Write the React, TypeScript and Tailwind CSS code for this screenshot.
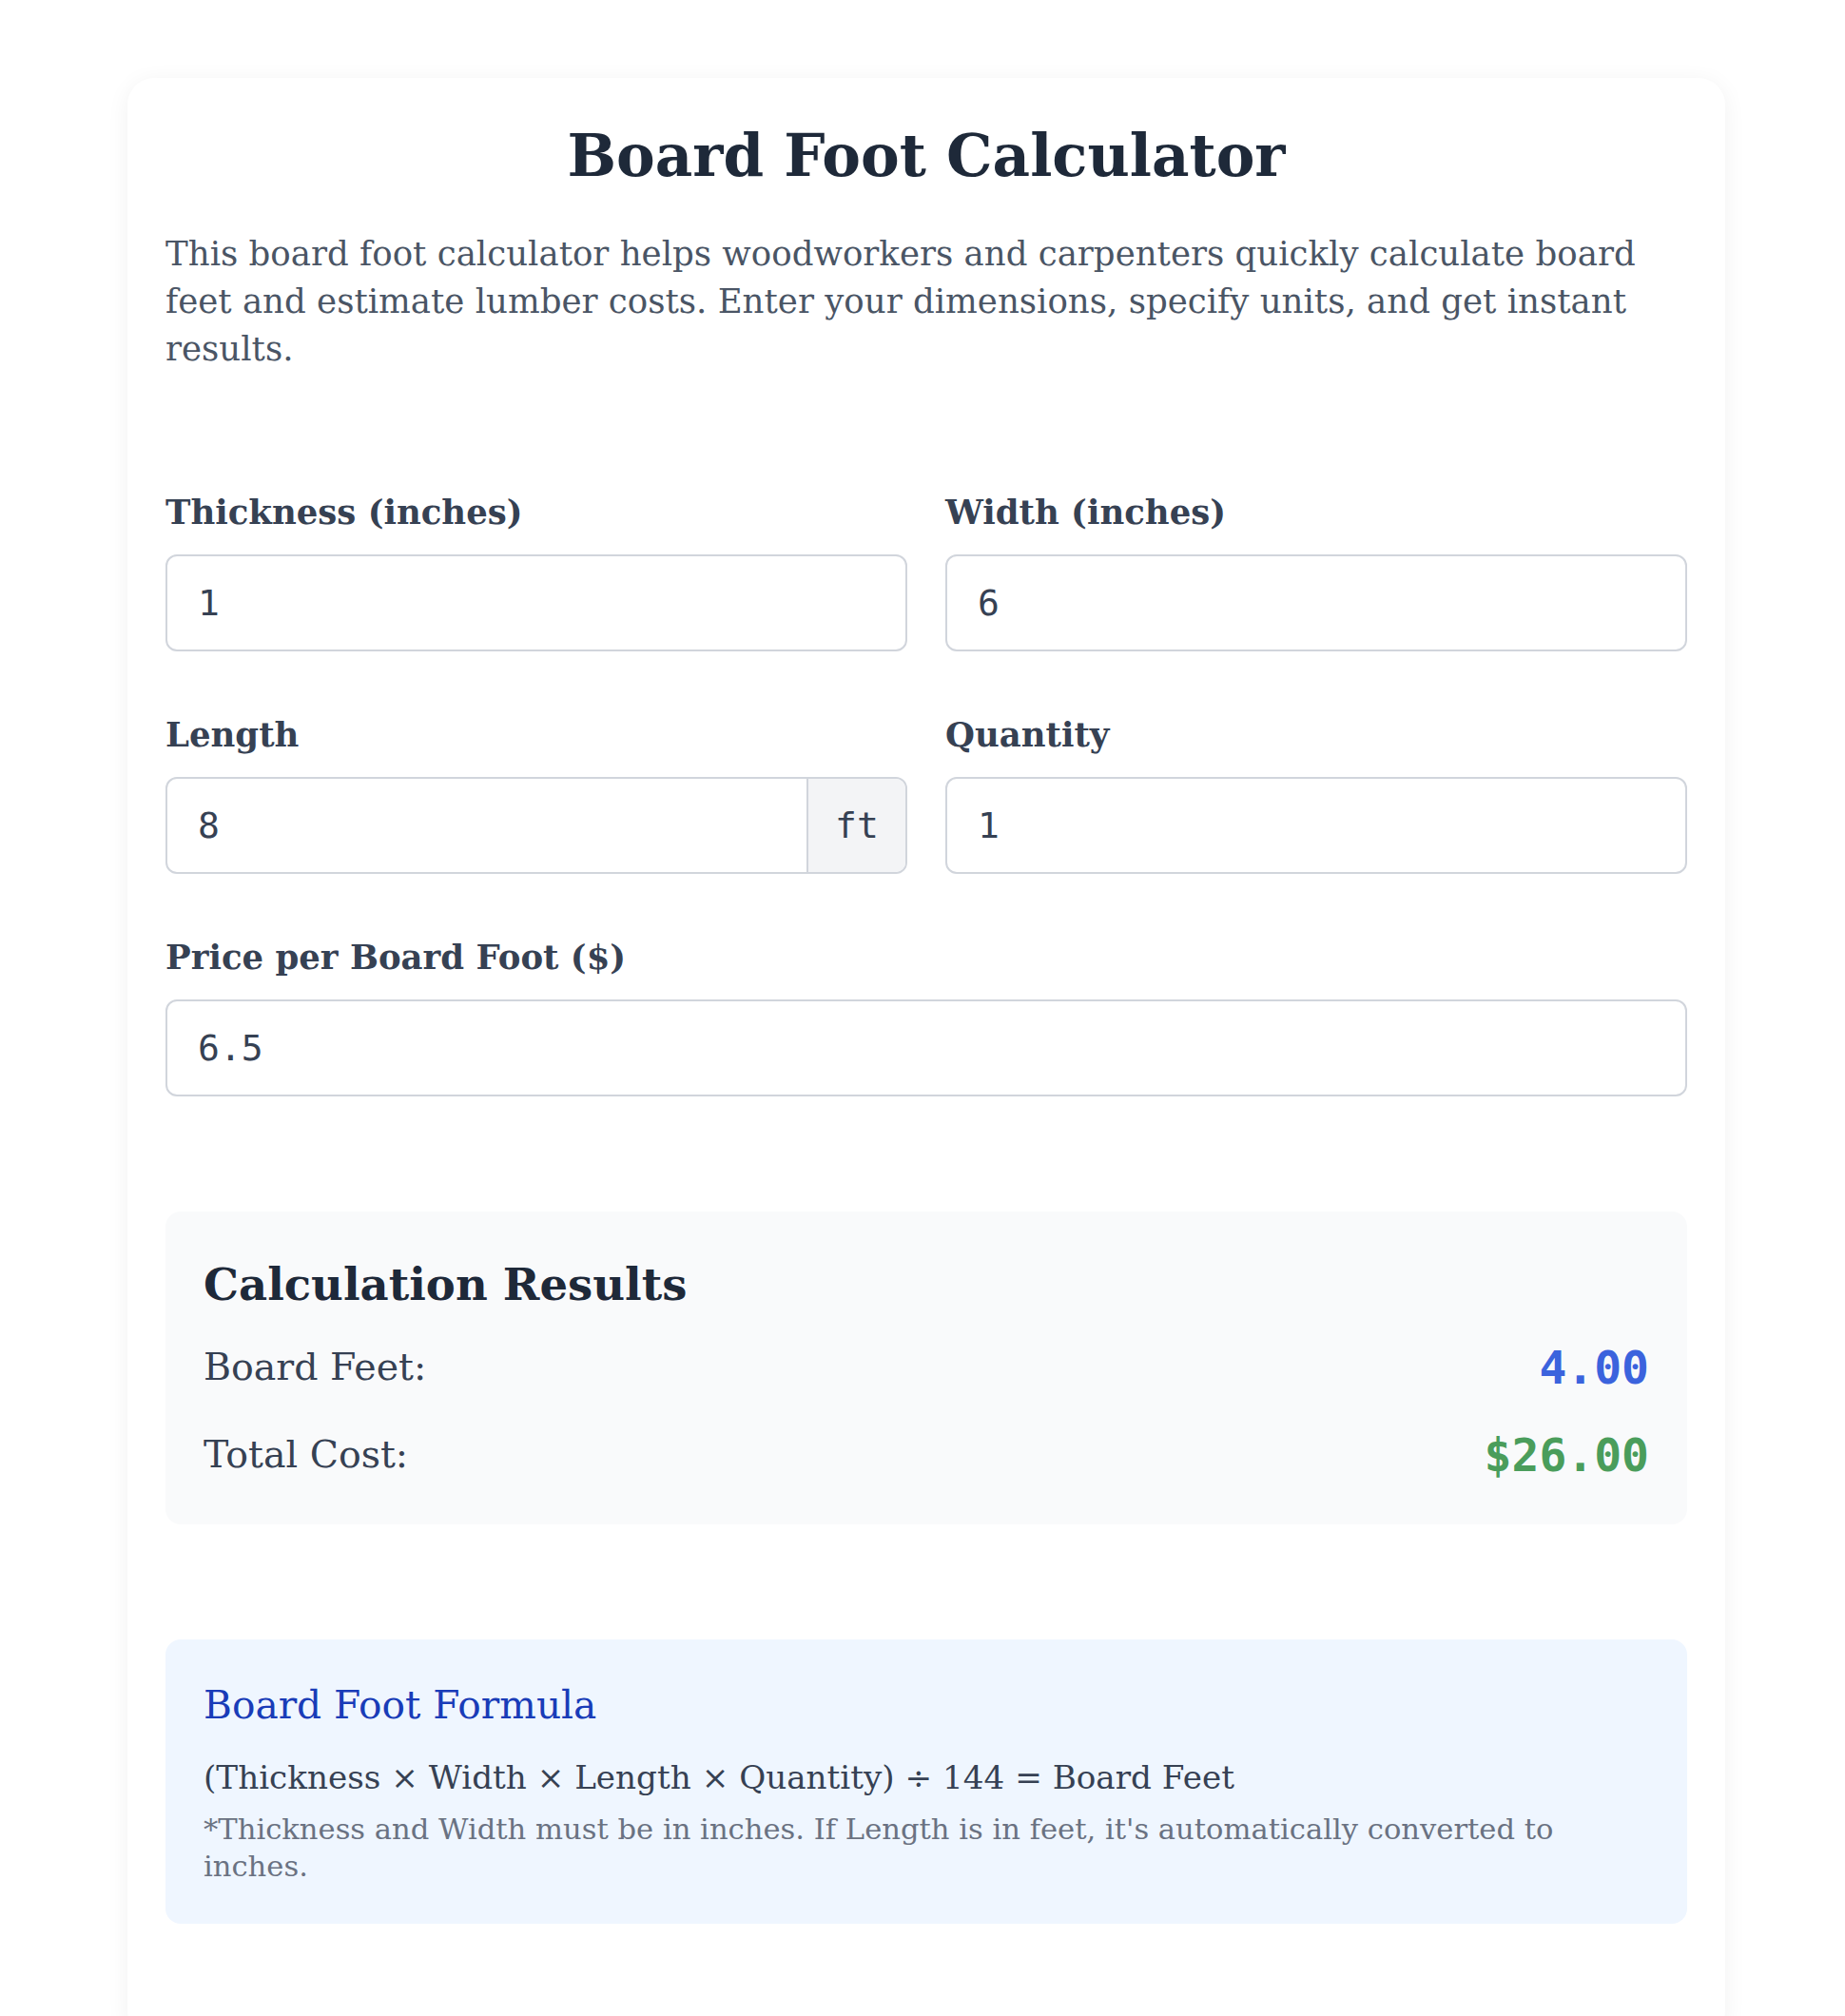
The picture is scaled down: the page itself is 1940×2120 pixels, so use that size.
import React from 'react';

const serif = "font-['DejaVu_Serif',serif]";
const mono = "font-['DejaVu_Sans_Mono',monospace]";

interface FieldProps {
  label: string;
  value: string;
  unit?: string;
}

const Field: React.FC<FieldProps> = ({ label, value, unit }) => (
  <div className="flex flex-col gap-6">
    <label className={`${serif} text-[35.5px] leading-[40px] font-bold text-gray-700`}>{label}</label>
    {unit ? (
      <div className="flex h-[102px] rounded-xl border-2 border-gray-300 overflow-hidden">
        <div className={`${mono} flex-1 flex items-center px-8 text-[38px] text-gray-700`}>{value}</div>
        <div
          className={`${mono} w-[104px] flex items-center justify-center bg-gray-100 border-l-2 border-gray-300 text-[38px] text-gray-700`}
        >
          {unit}
        </div>
      </div>
    ) : (
      <div className={`${mono} h-[102px] flex items-center px-8 rounded-xl border-2 border-gray-300 text-[38px] text-gray-700`}>
        {value}
      </div>
    )}
  </div>
);

export default function App() {
  return (
    <div className="min-h-screen bg-white pt-[82px] pl-2">
      <div className="mx-auto max-w-[1680px] rounded-[28px] bg-white p-10 shadow-[0_4px_24px_rgba(0,0,0,0.06)]">
        <h1 className={`${serif} text-center text-[61px] leading-[84px] font-bold text-gray-800`}>Board Foot Calculator</h1>
        <p className={`${serif} mt-9 text-[35.6px] leading-[50px] text-gray-600`}>
          This board foot calculator helps woodworkers and carpenters quickly calculate board feet and estimate lumber
          costs. Enter your dimensions, specify units, and get instant results.
        </p>

        <div className="mt-[127px] grid grid-cols-2 gap-x-10 gap-y-[68px]">
          <Field label="Thickness (inches)" value="1" />
          <Field label="Width (inches)" value="6" />
          <Field label="Length" value="8" unit="ft" />
          <Field label="Quantity" value="1" />
          <div className="col-span-2">
            <Field label="Price per Board Foot ($)" value="6.5" />
          </div>
        </div>

        {/* Results */}
        <div className="mt-[121px] rounded-2xl bg-gray-50 px-10 pt-12 pb-[43px]">
          <h2 className={`${serif} text-[46.5px] leading-[58px] font-bold text-gray-800`}>Calculation Results</h2>
          <div className="mt-7 flex flex-col gap-8">
            <div className="flex h-[60px] items-center justify-between">
              <span className={`${serif} text-[39.5px] text-gray-700`}>Board Feet:</span>
              <span className={`${mono} text-[48px] font-bold text-[#3b63dd]`}>4.00</span>
            </div>
            <div className="flex h-[60px] items-center justify-between">
              <span className={`${serif} text-[39.5px] text-gray-700`}>Total Cost:</span>
              <span className={`${mono} text-[48px] font-bold text-[#4a9d5b]`}>$26.00</span>
            </div>
          </div>
        </div>

        {/* Formula */}
        <div className="mt-[121px] rounded-2xl bg-blue-50 px-10 pt-10 pb-[41px]">
          <h3 className={`${serif} text-[40.7px] leading-[58px] text-blue-800`}>Board Foot Formula</h3>
          <p className={`${serif} mt-[22px] text-[34.2px] leading-[50px] text-gray-700`}>
            (Thickness × Width × Length × Quantity) ÷ 144 = Board Feet
          </p>
          <p className={`${serif} mt-[10px] text-[30.6px] leading-[39px] text-gray-500`}>
            *Thickness and Width must be in inches. If Length is in feet, it's automatically converted to inches.
          </p>
        </div>
        <div className="h-20" />
      </div>
    </div>
  );
}
